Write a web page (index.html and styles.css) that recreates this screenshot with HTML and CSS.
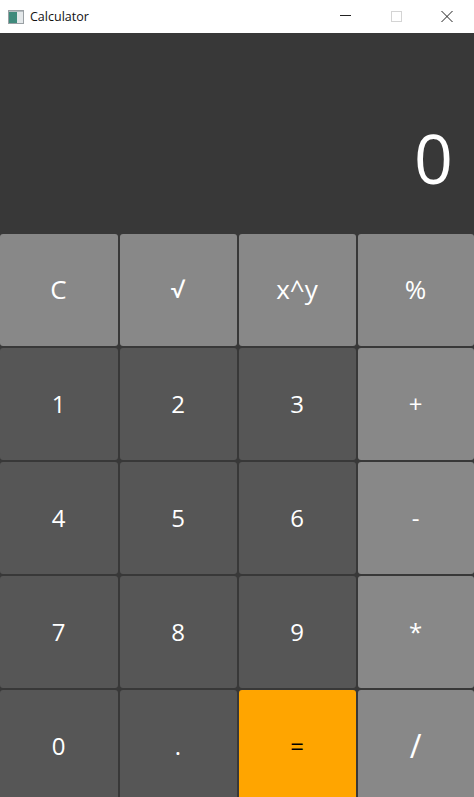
FILE: index.html
```html
<!DOCTYPE html>
<html lang="en">
<head>
    <meta charset="UTF-8">
    <title>Calculator</title>
    <link rel="stylesheet" href="styles.css">
</head>
<body>
    <div class="window">
        <div class="titlebar">
            <svg class="app-icon" width="16" height="14" viewBox="0 0 16 14">
                <rect x="0.5" y="0.5" width="15" height="13" fill="#e4e8ea" stroke="#9aa0a4"/>
                <rect x="1" y="2" width="8" height="11" fill="#3f8a7c"/>
                <rect x="1" y="1" width="14" height="1" fill="#b5bcc0"/>
            </svg>
            <span class="title">Calculator</span>
            <div class="controls">
                <svg class="control" width="46" height="33" viewBox="0 0 46 33">
                    <path d="M16 15.5h11" stroke="#222" fill="none"/>
                </svg>
                <svg class="control" width="46" height="33" viewBox="0 0 46 33">
                    <rect x="17.5" y="11.5" width="10" height="10" stroke="#d4d4d4" fill="none"/>
                </svg>
                <svg class="control" width="46" height="33" viewBox="0 0 46 33">
                    <path d="M17.5 11l11 11M28.5 11l-11 11" stroke="#222" fill="none"/>
                </svg>
            </div>
        </div>
        <div class="display">0</div>
        <div class="keypad">
            <button class="key light top">C</button>
            <button class="key light top root">√</button>
            <button class="key light top">x^y</button>
            <button class="key light top">%</button>
            <button class="key">1</button>
            <button class="key">2</button>
            <button class="key">3</button>
            <button class="key light">+</button>
            <button class="key">4</button>
            <button class="key">5</button>
            <button class="key">6</button>
            <button class="key light">-</button>
            <button class="key">7</button>
            <button class="key">8</button>
            <button class="key">9</button>
            <button class="key light">*</button>
            <button class="key">0</button>
            <button class="key">.</button>
            <button class="key equals">=</button>
            <button class="key light big">/</button>
        </div>
    </div>
</body>
</html>
```

FILE: styles.css
```css
* {
    margin: 0;
    padding: 0;
    box-sizing: border-box;
}

html, body {
    height: 100%;
    overflow: hidden;
    font-family: "Open Sans", "Noto Sans", sans-serif;
}

.window {
    height: 797px;
    display: flex;
    flex-direction: column;
    overflow: hidden;
    background: #383838;
}

.titlebar {
    height: 33px;
    flex: none;
    display: flex;
    align-items: center;
    padding-left: 8px;
    background: white;
}

.app-icon {
    margin-right: 6px;
}

.title {
    font-size: 12.5px;
    color: #111;
}

.controls {
    display: flex;
    margin-left: auto;
    margin-right: 4px;
}

.control {
    display: block;
    margin-left: 4px;
}

.display {
    height: 201px;
    flex: none;
    display: flex;
    align-items: flex-end;
    justify-content: flex-end;
    padding: 0 21px 42px 0;
    font-size: 68px;
    line-height: 1;
    color: white;
}

.keypad {
    display: grid;
    grid-template-columns: 118px 117px 117px 116px;
    grid-auto-rows: 112px;
    gap: 2px;
}

.key {
    padding: 0 1px 2px 0;
    border: none;
    border-radius: 3px;
    font-family: inherit;
    font-size: 24px;
    color: white;
    background: #565656;
}

.key.light {
    background: #888;
}

.key.top {
    font-size: 26px;
}

.key.root {
    font-family: Roboto, sans-serif;
}

.key.equals {
    color: black;
    background: orange;
}

.key.big {
    font-size: 32px;
}
```
